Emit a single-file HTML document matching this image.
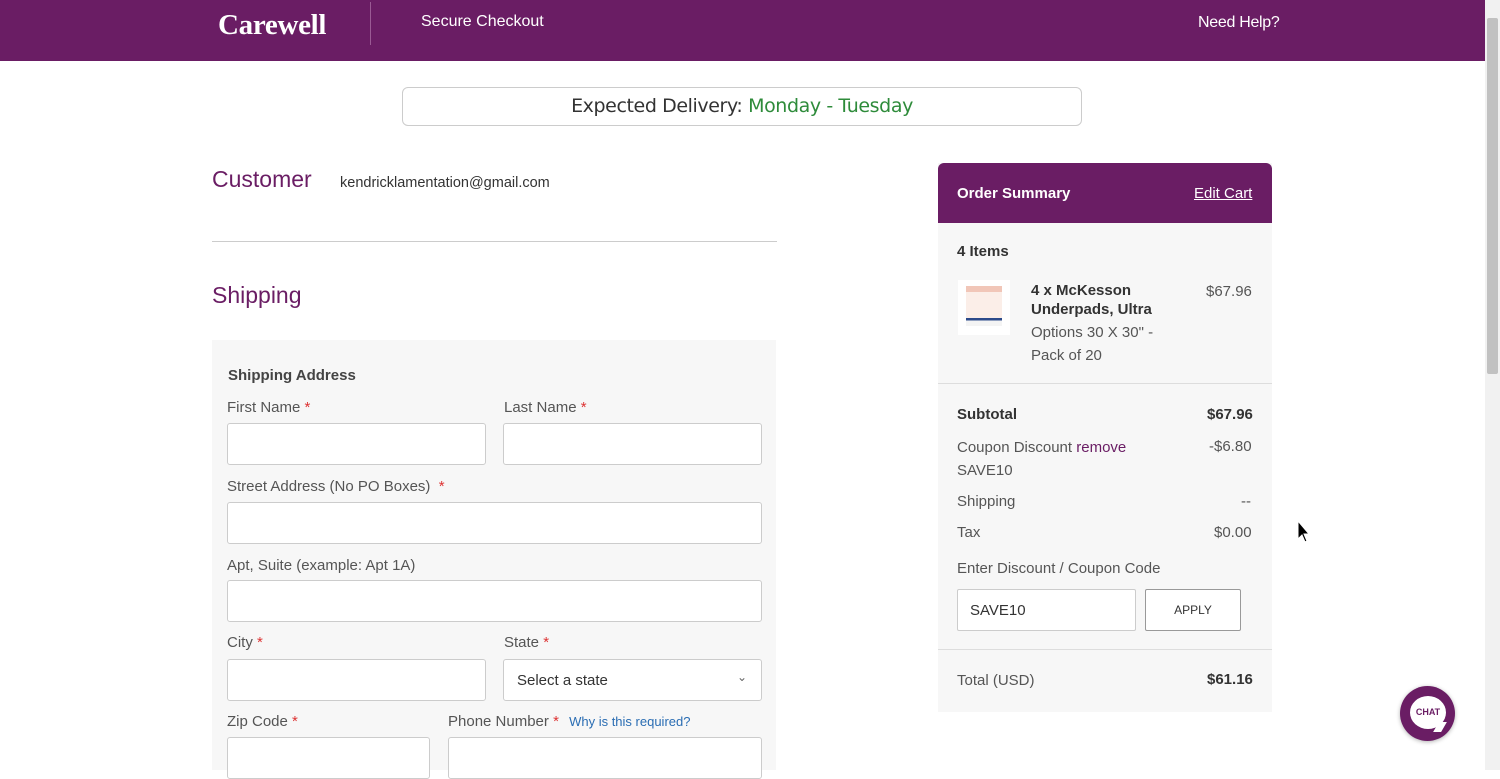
<!DOCTYPE html>
<html><head><meta charset="utf-8"><style>
*{box-sizing:border-box;margin:0;padding:0}
body{width:1500px;height:770px;overflow:hidden;background:#fff;font-family:"Liberation Sans",Arial,sans-serif;position:relative;color:#333}
.a{position:absolute}
.hdr{left:0;top:0;width:1485px;height:61px;background:#6a1d64}
.inp{position:absolute;background:#fff;border:1px solid #ccc;border-radius:3px;height:42px}
.lbl{position:absolute;font-size:15px;color:#555}
.req{color:#d33}
.sb{position:absolute;right:0;top:0;width:15px;height:770px;background:#f1f1f1}
</style></head><body>
<div class="a hdr"></div>
<div class="a" style="left:218px;top:9px;font-family:'Liberation Serif',serif;font-weight:bold;font-size:29px;color:#fff;letter-spacing:-0.3px">Carewell</div>
<div class="a" style="left:370px;top:2px;width:1px;height:43px;background:#9a5a94"></div>
<div class="a" style="left:421px;top:13px;font-size:16px;color:#fff">Secure Checkout</div>
<div class="a" style="left:1198px;top:14px;font-size:16px;color:#fff;letter-spacing:-0.3px">Need Help?</div>
<div class="sb"><div class="a" style="left:2px;top:18px;width:11px;height:356px;background:#c1c1c1;border-radius:2px"></div></div>

<div class="a" style="left:402px;top:87px;width:680px;height:39px;border:1px solid #ccc;border-radius:6px;text-align:center;font-size:19px;line-height:37px;color:#333;font-family:'DejaVu Sans',sans-serif;letter-spacing:-0.4px">Expected Delivery: <span style="color:#2e8b3a">Monday - Tuesday</span></div>

<div class="a" style="left:212px;top:166px;font-size:23px;color:#6a1d64">Customer</div>
<div class="a" style="left:340px;top:175px;font-size:14.5px;color:#333">kendricklamentation@gmail.com</div>
<div class="a" style="left:212px;top:241px;width:565px;height:1px;background:#ccc"></div>
<div class="a" style="left:212px;top:282px;font-size:23px;color:#6a1d64">Shipping</div>

<div class="a" style="left:212px;top:340px;width:564px;height:430px;background:#f7f7f7"></div>
<div class="a" style="left:228px;top:367px;font-size:15px;font-weight:bold;color:#444">Shipping Address</div>
<div class="lbl" style="left:227px;top:399px">First Name <span class="req">*</span></div>
<div class="lbl" style="left:504px;top:399px">Last Name <span class="req">*</span></div>
<div class="inp" style="left:227px;top:423px;width:259px"></div>
<div class="inp" style="left:503px;top:423px;width:259px"></div>
<div class="lbl" style="left:227px;top:478px">Street Address (No PO Boxes) &nbsp;<span class="req">*</span></div>
<div class="inp" style="left:227px;top:502px;width:535px"></div>
<div class="lbl" style="left:227px;top:557px">Apt, Suite (example: Apt 1A)</div>
<div class="inp" style="left:227px;top:580px;width:535px"></div>
<div class="lbl" style="left:227px;top:634px">City <span class="req">*</span></div>
<div class="lbl" style="left:504px;top:634px">State <span class="req">*</span></div>
<div class="inp" style="left:227px;top:659px;width:259px"></div>
<div class="inp" style="left:503px;top:659px;width:259px;font-size:15px;color:#333;padding:12px 13px">Select a state<span style="position:absolute;right:14px;top:10px;font-size:12px;color:#666">&#8964;</span></div>
<div class="lbl" style="left:227px;top:713px">Zip Code <span class="req">*</span></div>
<div class="lbl" style="left:448px;top:713px">Phone Number <span class="req">*</span> <span style="color:#2a6db3;font-size:13px;margin-left:6px">Why is this required?</span></div>
<div class="inp" style="left:227px;top:737px;width:203px"></div>
<div class="inp" style="left:448px;top:737px;width:314px"></div>

<div class="a" style="left:938px;top:163px;width:334px;height:549px;background:#f7f7f7"></div>
<div class="a" style="left:938px;top:163px;width:334px;height:60px;background:#6a1d64;border-radius:6px 6px 0 0"></div>
<div class="a" style="left:957px;top:185px;font-size:15px;font-weight:bold;color:#fff">Order Summary</div>
<div class="a" style="left:1194px;top:185px;font-size:15px;color:#fff;text-decoration:underline">Edit Cart</div>
<div class="a" style="left:957px;top:243px;font-size:15px;font-weight:bold;color:#333">4 Items</div>
<div class="a" style="left:958px;top:280px;width:52px;height:55px;background:#fff"><div style="margin:6px 8px;width:36px;height:40px;background:linear-gradient(#f1c6b8 0 15%,#fbeee8 15% 80%,#2c4a8a 80% 86%,#f4f4f4 86%)"></div></div>
<div class="a" style="left:1031px;top:281px;font-size:15px;font-weight:bold;color:#333;line-height:19px">4 x McKesson<br>Underpads, Ultra</div>
<div class="a" style="left:1031px;top:321px;font-size:15px;color:#555;line-height:23px">Options 30 X 30" -<br>Pack of 20</div>
<div class="a" style="left:1206px;top:283px;font-size:15px;color:#555">$67.96</div>
<div class="a" style="left:938px;top:383px;width:334px;height:1px;background:#ddd"></div>
<div class="a" style="left:957px;top:406px;font-size:15px;font-weight:bold;color:#333">Subtotal</div>
<div class="a" style="left:1207px;top:406px;font-size:15px;font-weight:bold;color:#333">$67.96</div>
<div class="a" style="left:957px;top:436px;font-size:15px;color:#555;line-height:23px">Coupon Discount <span style="color:#6a1d64">remove</span><br>SAVE10</div>
<div class="a" style="left:1209px;top:438px;font-size:15px;color:#555">-$6.80</div>
<div class="a" style="left:957px;top:493px;font-size:15px;color:#555">Shipping</div>
<div class="a" style="left:1241px;top:493px;font-size:15px;color:#555">--</div>
<div class="a" style="left:957px;top:524px;font-size:15px;color:#555">Tax</div>
<div class="a" style="left:1214px;top:524px;font-size:15px;color:#555">$0.00</div>
<div class="a" style="left:957px;top:560px;font-size:15px;color:#555">Enter Discount / Coupon Code</div>
<div class="inp" style="left:957px;top:589px;width:179px;height:42px;border-radius:2px;font-size:15px;padding:12px;color:#333">SAVE10</div>
<div class="inp" style="left:1145px;top:589px;width:96px;height:42px;border-color:#999;border-radius:2px;font-size:12px;text-align:center;line-height:40px;color:#333">APPLY</div>
<div class="a" style="left:938px;top:649px;width:334px;height:1px;background:#ddd"></div>
<div class="a" style="left:957px;top:672px;font-size:15px;color:#555">Total (USD)</div>
<div class="a" style="left:1207px;top:671px;font-size:15px;font-weight:bold;color:#333">$61.16</div>

<div class="a" style="left:1400px;top:686px;width:55px;height:55px;border-radius:50%;background:#6a1d64;box-shadow:0 1px 4px rgba(0,0,0,.3)"><div style="position:absolute;left:10px;top:10px;width:36px;height:33px;border-radius:50%;background:#fff;font-size:9px;font-weight:bold;color:#6a1d64;text-align:center;line-height:33px">CHAT</div><div style="position:absolute;left:36px;top:36px;width:8px;height:10px;background:#fff;transform:skewX(-30deg)"></div></div>
<svg class="a" style="left:1297px;top:520px" width="14" height="26" viewBox="0 0 14 26"><path d="M1 1 L1 19 L5 15 L8 22 L10 21 L7 14 L12 14 Z" fill="#000" stroke="#fff" stroke-width="1"/></svg>
</body></html>
